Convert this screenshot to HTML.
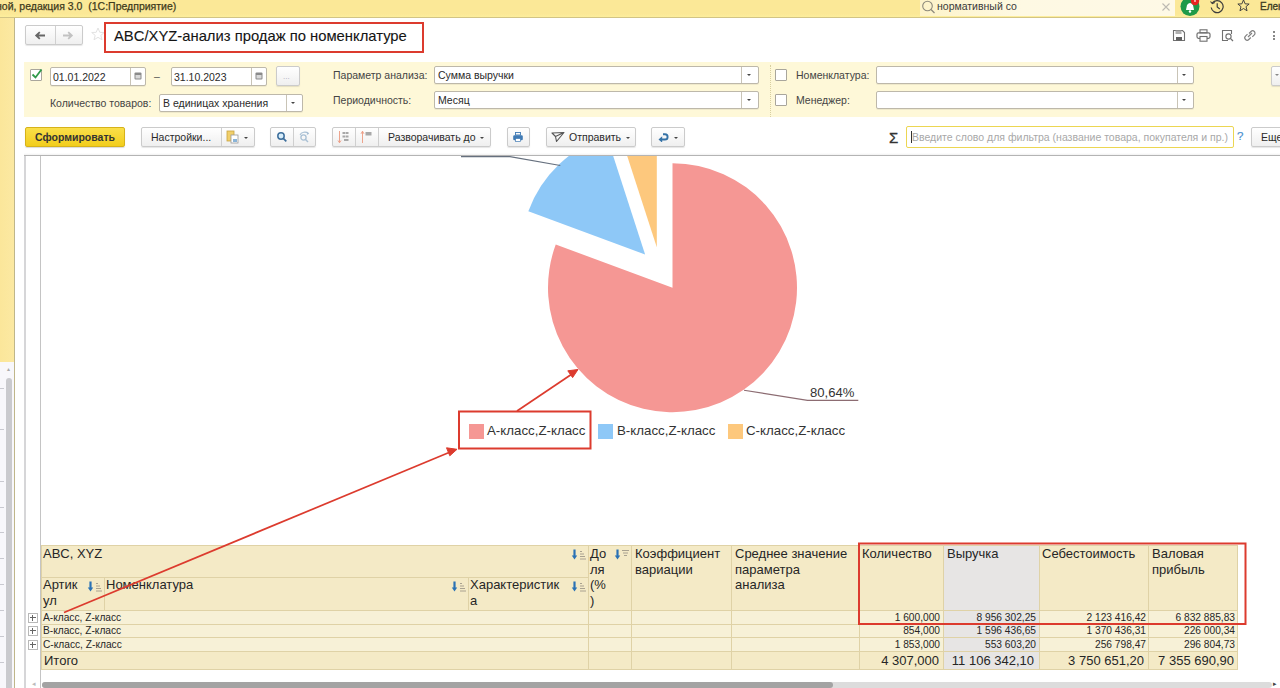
<!DOCTYPE html>
<html><head><meta charset="utf-8">
<style>
*{box-sizing:border-box;margin:0;padding:0}
html,body{width:1280px;height:688px;overflow:hidden;background:#fff;font-family:"Liberation Sans",sans-serif;color:#333}
.a{position:absolute}
.t{position:absolute;white-space:nowrap;line-height:1}
.fld{position:absolute;background:#fff;border:1px solid #bdb8aa;border-radius:2px;box-shadow:0 1px 0 rgba(0,0,0,.06)}
.btn{position:absolute;background:linear-gradient(#ffffff,#efefef);border:1px solid #cbcbcb;border-radius:2px;box-shadow:0 1px 1px rgba(0,0,0,.10)}
.dv{position:absolute;top:0;bottom:0;width:1px;background:#cfcfcf}
.dd{position:absolute;width:0;height:0;border-left:2.5px solid transparent;border-right:2.5px solid transparent;border-top:2.5px solid #444}
.lbl{font-size:10.5px;color:#444}
.val{font-size:10.5px;color:#2a2a2a}
</style></head><body>

<div class="a" style="left:0;top:0;width:1280px;height:18px;background:linear-gradient(#fbe897,#fbe897 80%,#fdee9c);border-bottom:1px solid #d2c485"></div>
<div class="t" style="left:-4px;top:0.5px;font-size:10.5px;color:#3e3a1c;-webkit-text-stroke:0.25px #3e3a1c">ной, редакция 3.0&nbsp; (1С:Предприятие)</div>
<div class="a" style="left:920px;top:0;width:255px;height:16px;background:linear-gradient(90deg,#fdf3c9,#fef9e3 40%,#fef9e6)"></div>
<svg class="a" style="left:921px;top:0px" width="15" height="14" viewBox="0 0 15 14"><circle cx="6.5" cy="6" r="4.8" fill="none" stroke="#8d8a7c" stroke-width="1.1"/><path d="M10 9.5L13.5 13" stroke="#8d8a7c" stroke-width="1.3"/></svg>
<div class="t" style="left:937px;top:1px;font-size:10.5px;color:#3a3a3a">нормативный со</div>
<svg class="a" style="left:1161px;top:2px" width="10" height="10" viewBox="0 0 10 10"><path d="M1.5 1.5L8.5 8.5M8.5 1.5L1.5 8.5" stroke="#bdbab2" stroke-width="1.1"/></svg>
<svg class="a" style="left:1179px;top:-2px" width="24" height="19" viewBox="0 0 24 19"><circle cx="11" cy="8.5" r="9.5" fill="#1f9a48"/><path d="M7 12 L8 7 Q11 3 14 7 L15 12 Z" fill="#fff"/><circle cx="11" cy="13.5" r="1.2" fill="#fff"/><circle cx="16" cy="3" r="4.2" fill="#e8241f"/><rect x="15.4" y="0.5" width="1.2" height="3.4" fill="#fff"/></svg>
<svg class="a" style="left:1209px;top:-1px" width="16" height="15" viewBox="0 0 16 15"><path d="M3.2 4.2A6 6 0 1 1 2.2 8.5" fill="none" stroke="#3c3c3c" stroke-width="1.2"/><path d="M1.5 2.5L3.3 4.6L5.8 3.6" fill="none" stroke="#3c3c3c" stroke-width="1.1"/><path d="M8.2 4.2V8L10.8 10" fill="none" stroke="#3c3c3c" stroke-width="1.2"/></svg>
<svg class="a" style="left:1237px;top:-1px" width="13" height="13" viewBox="0 0 15 15"><path d="M7.5 1L9.4 5.6L14 5.8L10.4 8.8L11.6 13.6L7.5 11L3.4 13.6L4.6 8.8L1 5.8L5.6 5.6Z" fill="none" stroke="#3c3c3c" stroke-width="1.1" stroke-linejoin="round"/></svg>
<div class="t" style="left:1260px;top:2px;font-size:10px;color:#3a3a22;-webkit-text-stroke:0.3px #3a3a22">Елена</div>

<div class="a" style="left:0;top:18px;width:14px;height:344px;background:linear-gradient(90deg,#fbe69a,#fce9a2)"></div>
<div class="a" style="left:0;top:362px;width:14px;height:326px;background:#f8f7fb"></div>
<div class="a" style="left:14px;top:18px;width:1px;height:670px;background:#bfb68a"></div>
<div class="a" style="left:6px;top:378px;width:6px;height:320px;background:#cacace;border-radius:3px"></div>
<div class="t" style="left:7px;top:366px;font-size:6px;color:#aaa">▴</div>

<div class="a" style="left:0;top:388px;width:4px;height:1px;background:#c9c9d0"></div>
<div class="a" style="left:0;top:429px;width:4px;height:1px;background:#c9c9d0"></div>
<div class="a" style="left:0;top:481px;width:4px;height:1px;background:#c9c9d0"></div>
<div class="a" style="left:0;top:507px;width:4px;height:1px;background:#c9c9d0"></div>
<div class="a" style="left:0;top:532px;width:4px;height:1px;background:#c9c9d0"></div>
<div class="a" style="left:0;top:558px;width:4px;height:1px;background:#c9c9d0"></div>
<div class="a" style="left:0;top:584px;width:4px;height:1px;background:#c9c9d0"></div>
<div class="a" style="left:0;top:610px;width:4px;height:1px;background:#c9c9d0"></div>
<div class="a" style="left:0;top:636px;width:4px;height:1px;background:#c9c9d0"></div>
<div class="a" style="left:0;top:662px;width:4px;height:1px;background:#c9c9d0"></div>
<div class="btn" style="left:25px;top:25px;width:58px;height:20px"><div class="dv" style="left:29px;background:#d0d0d0"></div></div>
<svg class="a" style="left:34px;top:31px" width="12" height="9" viewBox="0 0 12 9"><path d="M11 4.5H3M5.8 1.2L2.2 4.5L5.8 7.8" fill="none" stroke="#666" stroke-width="1.8"/></svg>
<svg class="a" style="left:62px;top:31px" width="12" height="9" viewBox="0 0 12 9"><path d="M1 4.5H9M6.2 1.2L9.8 4.5L6.2 7.8" fill="none" stroke="#c2c2c2" stroke-width="1.8"/></svg>
<svg class="a" style="left:91px;top:27px" width="14" height="14" viewBox="0 0 14 14"><path d="M7 1L8.8 5.3L13.3 5.5L9.8 8.4L11 12.8L7 10.3L3 12.8L4.2 8.4L0.7 5.5L5.2 5.3Z" fill="none" stroke="#e2e2e2" stroke-width="1"/></svg>
<div class="a" style="left:104px;top:22px;width:320px;height:31px;border:2px solid #dc3b2e;background:#fff"></div>
<div class="t" style="left:114px;top:29px;font-size:14.8px;color:#141414;-webkit-text-stroke:0.1px #141414">ABC/XYZ-анализ продаж по номенклатуре</div>

<svg class="a" style="left:1172px;top:29px" width="14" height="13" viewBox="0 0 14 13"><path d="M1.5 1.5H10.5L12.5 3.5V11.5H1.5Z" fill="none" stroke="#707070" stroke-width="1.1"/><rect x="3.5" y="1.5" width="6" height="3.5" fill="#b0b0b0"/><rect x="4" y="8" width="6" height="3.5" fill="#606060"/></svg>
<svg class="a" style="left:1196px;top:29px" width="15" height="13" viewBox="0 0 15 13"><rect x="4" y="0.8" width="7" height="3" fill="none" stroke="#707070" stroke-width="1.1"/><rect x="1" y="3.8" width="13" height="5.5" rx="1.5" fill="none" stroke="#707070" stroke-width="1.2"/><rect x="4" y="7.5" width="7" height="4.7" fill="#fff" stroke="#707070" stroke-width="1.1"/></svg>
<svg class="a" style="left:1221px;top:29px" width="13" height="13" viewBox="0 0 13 13"><path d="M7 11.5H1.5V1.5H10.5V5" fill="none" stroke="#707070" stroke-width="1.1"/><circle cx="7.5" cy="7.5" r="2.6" fill="none" stroke="#707070" stroke-width="1.1"/><path d="M9.4 9.4L12 12" stroke="#707070" stroke-width="1.3"/></svg>
<svg class="a" style="left:1243px;top:29px" width="14" height="13" viewBox="0 0 14 13"><path d="M6 4.5L8 2.5A2.3 2.3 0 0 1 11.3 5.8L9.3 7.8M7.8 8.5L5.8 10.5A2.3 2.3 0 0 1 2.5 7.2L4.5 5.2M5 8L9 4" fill="none" stroke="#808080" stroke-width="1.2"/></svg>
<div class="a" style="left:1273px;top:31px;width:2.4px;height:2.4px;border-radius:50%;background:#606060"></div>
<div class="a" style="left:1273px;top:34.5px;width:2.4px;height:2.4px;border-radius:50%;background:#606060"></div>
<div class="a" style="left:1273px;top:38px;width:2.4px;height:2.4px;border-radius:50%;background:#606060"></div>

<div class="a" style="left:24px;top:62px;width:1256px;height:55px;background:#fef8d8"></div>
<div class="a" style="left:30px;top:69px;width:12px;height:12px;background:#fff;border:1px solid #a9a69c;border-radius:1px"></div>
<svg class="a" style="left:30px;top:67px" width="14" height="14" viewBox="0 0 14 14"><path d="M2.5 7.5L5.5 10.5L11.5 2.5" fill="none" stroke="#2f9a4a" stroke-width="1.8"/></svg>
<div class="fld" style="left:50px;top:67px;width:96px;height:19px"><div class="dv" style="left:79px;background:#c9c4b6"></div></div>
<div class="t val" style="left:53px;top:72px">01.01.2022</div>
<svg class="a" style="left:134px;top:72px" width="8" height="8" viewBox="0 0 8 8"><rect x="0.5" y="0.5" width="7" height="7" rx="1" fill="#8a8a8a"/><rect x="1.5" y="3" width="5" height="3.5" fill="#d8d8d8"/></svg>
<div class="t" style="left:154px;top:71px;font-size:10.5px;color:#555">–</div>
<div class="fld" style="left:171px;top:67px;width:96px;height:19px"><div class="dv" style="left:79px;background:#c9c4b6"></div></div>
<div class="t val" style="left:174px;top:72px">31.10.2023</div>
<svg class="a" style="left:255px;top:72px" width="8" height="8" viewBox="0 0 8 8"><rect x="0.5" y="0.5" width="7" height="7" rx="1" fill="#8a8a8a"/><rect x="1.5" y="3" width="5" height="3.5" fill="#d8d8d8"/></svg>
<div class="btn" style="left:276px;top:66px;width:24px;height:20px"></div>
<div class="t" style="left:283px;top:73px;font-size:8px;color:#aab">...</div>

<div class="t lbl" style="left:50px;top:98px">Количество товаров:</div>
<div class="fld" style="left:159px;top:94px;width:144px;height:18px"><div class="dv" style="left:126px;background:#c9c4b6"></div></div>
<div class="t val" style="left:163px;top:98px">В единицах хранения</div>
<div class="dd" style="left:291px;top:102px"></div>

<div class="t lbl" style="left:333px;top:70px">Параметр анализа:</div>
<div class="fld" style="left:434px;top:66px;width:325px;height:18px"><div class="dv" style="left:306px;background:#c9c4b6"></div></div>
<div class="t val" style="left:438px;top:70px">Сумма выручки</div>
<div class="dd" style="left:747px;top:74px"></div>
<div class="t lbl" style="left:333px;top:95px">Периодичность:</div>
<div class="fld" style="left:434px;top:91px;width:325px;height:18px"><div class="dv" style="left:306px;background:#c9c4b6"></div></div>
<div class="t val" style="left:438px;top:95px">Месяц</div>
<div class="dd" style="left:747px;top:99px"></div>

<div class="a" style="left:770px;top:65px;width:0;height:52px;border-left:1px dotted #d8cf9f"></div>
<div class="a" style="left:775px;top:69px;width:12px;height:12px;background:#fff;border:1px solid #a9a69c;border-radius:1px"></div>
<div class="t lbl" style="left:796px;top:70px">Номенклатура:</div>
<div class="fld" style="left:876px;top:66px;width:318px;height:18px"><div class="dv" style="left:300px;background:#c9c4b6"></div></div>
<div class="dd" style="left:1182px;top:74px"></div>
<div class="a" style="left:775px;top:94px;width:12px;height:12px;background:#fff;border:1px solid #a9a69c;border-radius:1px"></div>
<div class="t lbl" style="left:796px;top:95px">Менеджер:</div>
<div class="fld" style="left:876px;top:91px;width:318px;height:18px"><div class="dv" style="left:300px;background:#c9c4b6"></div></div>
<div class="dd" style="left:1182px;top:99px"></div>
<div class="btn" style="left:1271px;top:66px;width:20px;height:20px"></div><div class="dd" style="left:1275px;top:74px;border-top-color:#888"></div>

<div class="a" style="left:25px;top:127px;width:100px;height:20px;background:linear-gradient(#fadf4a,#f2cd1c);border:1px solid #d6b21a;border-radius:2px;box-shadow:0 1px 1px rgba(0,0,0,.15)"></div>
<div class="t" style="left:35px;top:132px;font-size:10.5px;font-weight:bold;color:#333">Сформировать</div>
<div class="btn" style="left:141px;top:127px;width:114px;height:20px"><div class="dv" style="left:79px"></div></div>
<div class="t val" style="left:151px;top:132px">Настройки...</div>
<svg class="a" style="left:225px;top:129px" width="16" height="16" viewBox="0 0 16 16"><rect x="2" y="2" width="7" height="10" fill="#f1cf6a" stroke="#c9a441" stroke-width="0.8"/><rect x="6" y="6" width="7" height="8" fill="#fff" stroke="#999" stroke-width="0.8"/><rect x="8" y="10" width="4" height="3" fill="#8ab4d8"/></svg>
<div class="dd" style="left:244px;top:137px"></div>
<div class="btn" style="left:270px;top:127px;width:46px;height:20px"><div class="dv" style="left:22px"></div></div>
<svg class="a" style="left:276px;top:131px" width="12" height="12" viewBox="0 0 12 12"><circle cx="5" cy="5" r="3.2" fill="#d8eefb" stroke="#3e6f9c" stroke-width="1.5"/><path d="M7.3 7.3L10.3 10.3" stroke="#3e6f9c" stroke-width="1.7"/></svg>
<svg class="a" style="left:298px;top:130px" width="13" height="14" viewBox="0 0 13 14"><circle cx="5.5" cy="7.5" r="2.6" fill="none" stroke="#a9c0d4" stroke-width="1.3"/><path d="M7.5 9.5L10 12" stroke="#a9c0d4" stroke-width="1.4"/><path d="M2 5A5 4 0 0 1 10.5 3.5" fill="none" stroke="#a9c0d4" stroke-width="1.1"/><path d="M9 1.8L11.2 3.8L8.8 5" fill="#a9c0d4"/></svg>

<div class="btn" style="left:332px;top:127px;width:159px;height:20px"><div class="dv" style="left:22px"></div><div class="dv" style="left:45px"></div></div>
<svg class="a" style="left:336px;top:130px" width="14" height="14" viewBox="0 0 14 14"><path d="M3.5 1V12.5M2 10.5L3.5 12.8L5 10.5" fill="none" stroke="#ec9a80" stroke-width="0.9"/><rect x="6.5" y="2" width="2.5" height="2" fill="#a8a8a8"/><rect x="9.5" y="2" width="3" height="2" fill="#a8a8a8"/><rect x="6.5" y="5.5" width="2.5" height="2" fill="#a8a8a8"/><rect x="9.5" y="5.5" width="3" height="2" fill="#a8a8a8"/><rect x="8" y="9" width="4.5" height="2" fill="#a8a8a8"/></svg>
<svg class="a" style="left:359px;top:130px" width="14" height="14" viewBox="0 0 14 14"><path d="M3.5 13V1.5M2 3.8L3.5 1.2L5 3.8" fill="none" stroke="#ec9a80" stroke-width="0.9"/><rect x="6.5" y="2" width="6" height="3.5" fill="#a8a8a8"/></svg>
<div class="t val" style="left:388px;top:132px">Разворачивать до</div>
<div class="dd" style="left:480px;top:137px"></div>
<div class="btn" style="left:507px;top:127px;width:23px;height:20px"></div>
<svg class="a" style="left:512px;top:131px" width="12" height="12" viewBox="0 0 12 12"><rect x="3.5" y="1.5" width="5" height="2.5" fill="none" stroke="#3f7ab4" stroke-width="0.9"/><rect x="1.2" y="4.2" width="9.6" height="5" rx="1.3" fill="#3f7ab4"/><rect x="3.5" y="7.5" width="5" height="3" fill="#fff" stroke="#3f7ab4" stroke-width="0.7"/></svg>
<div class="btn" style="left:546px;top:127px;width:90px;height:20px"></div>
<svg class="a" style="left:551px;top:131px" width="14" height="12" viewBox="0 0 14 12"><path d="M1 2L13 1.5L5.5 10.5L4.5 5.5Z M4.5 5.5L13 1.5" fill="none" stroke="#555" stroke-width="1.1" stroke-linejoin="round"/></svg>
<div class="t val" style="left:569px;top:132px">Отправить</div>
<div class="dd" style="left:626px;top:137px"></div>
<div class="btn" style="left:651px;top:127px;width:34px;height:20px"></div>
<svg class="a" style="left:658px;top:132px" width="11" height="10" viewBox="0 0 11 10"><path d="M4 7.5H7A2.6 2.6 0 0 0 7 2.3H5" fill="none" stroke="#3572a6" stroke-width="1.9"/><path d="M0.5 7.5L4.2 4.3V10.7Z" fill="#3572a6"/></svg>
<div class="dd" style="left:674px;top:137px"></div>

<div class="t" style="left:889px;top:130px;font-size:15px;color:#333;-webkit-text-stroke:0.3px #333">Σ</div>
<div class="a" style="left:906px;top:126px;width:328px;height:22px;background:#fff;border:1.6px solid #ecd652;border-radius:2px"></div>
<div class="a" style="left:911px;top:131px;width:1px;height:12px;background:#333"></div>
<div class="t" style="left:912px;top:132px;font-size:10.5px;color:#a8a8a8">Введите слово для фильтра (название товара, покупателя и пр.)</div>
<div class="t" style="left:1237px;top:131px;font-size:11.5px;color:#4a90d0;-webkit-text-stroke:0.2px #4a90d0">?</div>
<div class="btn" style="left:1251px;top:127px;width:40px;height:20px"></div>
<div class="t val" style="left:1261px;top:132px">Еще</div>
<div class="a" style="left:24px;top:153px;width:1256px;height:2px;background:linear-gradient(#ffffff,#f1f1f1)"></div><div class="a" style="left:24px;top:155px;width:1256px;height:1px;background:#b4b4b4"></div>

<div class="a" style="left:24px;top:156px;width:2px;height:532px;background:#d6d6d8"></div>
<div class="a" style="left:40px;top:156px;width:1px;height:532px;background:#c4c4c4"></div>
<svg class="a" style="left:0;top:0" width="1280" height="688" viewBox="0 0 1280 688">
<defs><clipPath id="cl"><rect x="41" y="156" width="1239" height="532"/></clipPath></defs>
<g clip-path="url(#cl)">
<path d="M672.50 287.70L672.50 163.20A124.5 124.5 0 1 1 555.74 244.50Z" fill="#f59794"/>
<path d="M645.10 254.40L528.34 211.20A124.5 124.5 0 0 1 606.70 135.97Z" fill="#8ec8f7"/>
<path d="M656.80 247.30L618.40 128.87A124.5 124.5 0 0 1 656.80 122.80Z" fill="#fdc87d"/>
<path d="M560.3 165.5L510 156.6H461" fill="none" stroke="#66707e" stroke-width="1.2"/>
<path d="M744 390.2L807.5 400.4H858.3" fill="none" stroke="#8c6c72" stroke-width="1.1"/>
</g>
</svg>
<div class="t" style="left:810px;top:386px;font-size:13.1px;color:#333">80,64%</div>
<div class="a" style="left:469px;top:424px;width:15px;height:15px;background:#f59794"></div>
<div class="t" style="left:487px;top:424px;font-size:13.3px;color:#333">A-класс,Z-класс</div>
<div class="a" style="left:598px;top:424px;width:15px;height:15px;background:#8ec8f7"></div>
<div class="t" style="left:617px;top:424px;font-size:13.3px;color:#333">B-класс,Z-класс</div>
<div class="a" style="left:728px;top:424px;width:15px;height:15px;background:#fdc87d"></div>
<div class="t" style="left:746px;top:424px;font-size:13.3px;color:#333">C-класс,Z-класс</div>

<div class="a" style="left:41px;top:545px;width:1196px;height:65px;background:#f4eac6"></div>
<div class="a" style="left:943px;top:545px;width:96px;height:65px;background:#e7e5e4"></div>
<div class="a" style="left:41px;top:610px;width:1196px;height:14px;background:#f7f1d7"></div>
<div class="a" style="left:943px;top:610px;width:96px;height:14px;background:#e7e5e4"></div>
<div class="a" style="left:41px;top:624px;width:1196px;height:13px;background:#f7f1d7"></div>
<div class="a" style="left:943px;top:624px;width:96px;height:13px;background:#e7e5e4"></div>
<div class="a" style="left:41px;top:637px;width:1196px;height:14px;background:#f7f1d7"></div>
<div class="a" style="left:943px;top:637px;width:96px;height:14px;background:#e7e5e4"></div>
<div class="a" style="left:41px;top:651px;width:1196px;height:18px;background:#f4eac6"></div>
<div class="a" style="left:943px;top:651px;width:96px;height:18px;background:#e7e5e4"></div>
<div class="a" style="left:41px;top:545px;width:1196px;height:1px;background:#dfd2a6"></div>
<div class="a" style="left:41px;top:610px;width:1196px;height:1px;background:#dfd2a6"></div>
<div class="a" style="left:41px;top:624px;width:1196px;height:1px;background:#dfd2a6"></div>
<div class="a" style="left:41px;top:637px;width:1196px;height:1px;background:#dfd2a6"></div>
<div class="a" style="left:41px;top:651px;width:1196px;height:1px;background:#dfd2a6"></div>
<div class="a" style="left:41px;top:669px;width:1196px;height:1px;background:#dfd2a6"></div>
<div class="a" style="left:41px;top:577px;width:547px;height:1px;background:#dfd2a6"></div>
<div class="a" style="left:588px;top:545px;width:1px;height:125px;background:#dfd2a6"></div>
<div class="a" style="left:631px;top:545px;width:1px;height:125px;background:#dfd2a6"></div>
<div class="a" style="left:731px;top:545px;width:1px;height:125px;background:#dfd2a6"></div>
<div class="a" style="left:859px;top:545px;width:1px;height:125px;background:#dfd2a6"></div>
<div class="a" style="left:943px;top:545px;width:1px;height:125px;background:#dfd2a6"></div>
<div class="a" style="left:1039px;top:545px;width:1px;height:125px;background:#dfd2a6"></div>
<div class="a" style="left:1148px;top:545px;width:1px;height:125px;background:#dfd2a6"></div>
<div class="a" style="left:1237px;top:545px;width:1px;height:125px;background:#dfd2a6"></div>
<div class="a" style="left:104px;top:577px;width:1px;height:33px;background:#dfd2a6"></div>
<div class="a" style="left:468px;top:577px;width:1px;height:33px;background:#dfd2a6"></div>
<div class="a" style="left:41px;top:545px;width:1px;height:125px;background:#dfd2a6"></div>
<div class="t" style="left:43px;top:546px;font-size:13px;color:#262626;line-height:15.7px">ABC, XYZ</div>
<div class="t" style="left:43px;top:577px;font-size:13px;color:#262626;line-height:15.7px">Артик<br>ул</div>
<div class="t" style="left:106px;top:577px;font-size:13px;color:#262626;line-height:15.7px">Номенклатура</div>
<div class="t" style="left:470px;top:577px;font-size:13px;color:#262626;line-height:15.7px">Характеристик<br>а</div>
<div class="t" style="left:590px;top:546px;font-size:13px;color:#262626;line-height:15.7px">До<br>ля<br>(%<br>)</div>
<div class="t" style="left:635px;top:546px;font-size:13px;color:#262626;line-height:15.7px">Коэффициент<br>вариации</div>
<div class="t" style="left:735px;top:546px;font-size:13px;color:#262626;line-height:15.7px">Среднее значение<br>параметра<br>анализа</div>
<div class="t" style="left:862px;top:546px;font-size:13px;color:#262626;line-height:15.7px">Количество</div>
<div class="t" style="left:947px;top:546px;font-size:13px;color:#262626;line-height:15.7px">Выручка</div>
<div class="t" style="left:1042px;top:546px;font-size:13px;color:#262626;line-height:15.7px">Себестоимость</div>
<div class="t" style="left:1152px;top:546px;font-size:13px;color:#262626;line-height:15.7px">Валовая<br>прибыль</div>
<div class="t" style="left:43px;top:613px;font-size:10.2px;color:#262626">A-класс, Z-класс</div>
<div class="t" style="left:43px;top:626px;font-size:10.2px;color:#262626">B-класс, Z-класс</div>
<div class="t" style="left:43px;top:640px;font-size:10.2px;color:#262626">C-класс, Z-класс</div>
<div class="t" style="left:44px;top:653px;font-size:13px;color:#262626;line-height:15.7px">Итого</div>

<div class="t" style="right:340px;top:613px;font-size:10.2px;color:#262626">1 600,000</div>
<div class="t" style="right:244px;top:613px;font-size:10.2px;color:#262626">8 956 302,25</div>
<div class="t" style="right:134px;top:613px;font-size:10.2px;color:#262626">2 123 416,42</div>
<div class="t" style="right:45px;top:613px;font-size:10.2px;color:#262626">6 832 885,83</div>
<div class="t" style="right:340px;top:626px;font-size:10.2px;color:#262626">854,000</div>
<div class="t" style="right:244px;top:626px;font-size:10.2px;color:#262626">1 596 436,65</div>
<div class="t" style="right:134px;top:626px;font-size:10.2px;color:#262626">1 370 436,31</div>
<div class="t" style="right:45px;top:626px;font-size:10.2px;color:#262626">226 000,34</div>
<div class="t" style="right:340px;top:640px;font-size:10.2px;color:#262626">1 853,000</div>
<div class="t" style="right:244px;top:640px;font-size:10.2px;color:#262626">553 603,20</div>
<div class="t" style="right:134px;top:640px;font-size:10.2px;color:#262626">256 798,47</div>
<div class="t" style="right:45px;top:640px;font-size:10.2px;color:#262626">296 804,73</div>
<div class="t" style="right:341px;top:653px;font-size:13px;color:#262626;line-height:15.7px">4 307,000</div>
<div class="t" style="right:246px;top:653px;font-size:13px;color:#262626;line-height:15.7px">11 106 342,10</div>
<div class="t" style="right:136px;top:653px;font-size:13px;color:#262626;line-height:15.7px">3 750 651,20</div>
<div class="t" style="right:46px;top:653px;font-size:13px;color:#262626;line-height:15.7px">7 355 690,90</div>
<svg class="a" style="left:87px;top:581px" width="16" height="11" viewBox="0 0 16 11"><path d="M3.5 0.5V8" stroke="#2a72b5" stroke-width="2.2"/><path d="M0.8 6.5L3.5 10.5L6.2 6.5Z" fill="#2a72b5"/><path d="M9 2.5H11M9 5H13M9 7.5H14M9 10H15" stroke="#a09a8a" stroke-width="0.9"/></svg><svg class="a" style="left:451px;top:581px" width="16" height="11" viewBox="0 0 16 11"><path d="M3.5 0.5V8" stroke="#2a72b5" stroke-width="2.2"/><path d="M0.8 6.5L3.5 10.5L6.2 6.5Z" fill="#2a72b5"/><path d="M9 2.5H11M9 5H13M9 7.5H14M9 10H15" stroke="#a09a8a" stroke-width="0.9"/></svg><svg class="a" style="left:571px;top:581px" width="16" height="11" viewBox="0 0 16 11"><path d="M3.5 0.5V8" stroke="#2a72b5" stroke-width="2.2"/><path d="M0.8 6.5L3.5 10.5L6.2 6.5Z" fill="#2a72b5"/><path d="M9 2.5H11M9 5H13M9 7.5H14M9 10H15" stroke="#a09a8a" stroke-width="0.9"/></svg><svg class="a" style="left:571px;top:549px" width="16" height="11" viewBox="0 0 16 11"><path d="M3.5 0.5V8" stroke="#2a72b5" stroke-width="2.2"/><path d="M0.8 6.5L3.5 10.5L6.2 6.5Z" fill="#2a72b5"/><path d="M9 2.5H11M9 5H13M9 7.5H14M9 10H15" stroke="#a09a8a" stroke-width="0.9"/></svg><svg class="a" style="left:614px;top:549px" width="16" height="11" viewBox="0 0 16 11"><path d="M3.5 0.5V8" stroke="#2a72b5" stroke-width="2.2"/><path d="M0.8 6.5L3.5 10.5L6.2 6.5Z" fill="#2a72b5"/><path d="M8 1.5H15M9 4H14M10 6.5H13" stroke="#a09a8a" stroke-width="0.9"/></svg>
<div class="a" style="left:28px;top:613px;width:10px;height:10px;border:1px solid #b8b8b8;background:#fff"></div><div class="a" style="left:30px;top:617px;width:6px;height:1px;background:#666"></div><div class="a" style="left:32px;top:615px;width:1px;height:6px;background:#666"></div>
<div class="a" style="left:28px;top:626px;width:10px;height:10px;border:1px solid #b8b8b8;background:#fff"></div><div class="a" style="left:30px;top:630px;width:6px;height:1px;background:#666"></div><div class="a" style="left:32px;top:628px;width:1px;height:6px;background:#666"></div>
<div class="a" style="left:28px;top:640px;width:10px;height:10px;border:1px solid #b8b8b8;background:#fff"></div><div class="a" style="left:30px;top:644px;width:6px;height:1px;background:#666"></div><div class="a" style="left:32px;top:642px;width:1px;height:6px;background:#666"></div>
<div class="a" style="left:42px;top:682px;width:1230px;height:6px;background:#dcdcdc;border-radius:3px"></div>
<div class="a" style="left:42px;top:682px;width:791px;height:6px;background:#a3a3a3;border-radius:3px"></div>
<div class="t" style="left:32px;top:680px;font-size:7px;color:#bbb">◂</div>
<div class="t" style="left:1273px;top:680px;font-size:7px;color:#444">▸</div>
<svg class="a" style="left:0;top:0" width="1280" height="688" viewBox="0 0 1280 688">
<rect x="459" y="411.5" width="131.5" height="37" fill="none" stroke="#dc3b2e" stroke-width="2"/>
<rect x="859" y="543.5" width="386.5" height="80.5" fill="none" stroke="#dc3b2e" stroke-width="2"/>
<path d="M64 612.5L449 452.5" stroke="#dc3b2e" stroke-width="1.7"/>
<path d="M457 449.3L446.5 447.8L449.8 455.8Z" fill="#dc3b2e" stroke="#dc3b2e" stroke-width="1"/>
<path d="M517 411L572 374" stroke="#dc3b2e" stroke-width="1.7"/>
<path d="M578 369.5L567.8 370.8L572.6 377.6Z" fill="#dc3b2e" stroke="#dc3b2e" stroke-width="1"/>
</svg>
</body></html>
